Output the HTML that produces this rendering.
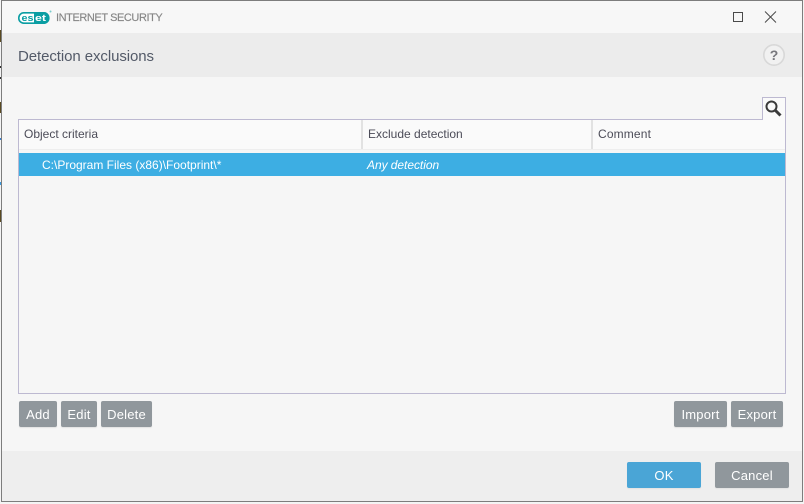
<!DOCTYPE html>
<html><head><meta charset="utf-8">
<style>
html,body{margin:0;padding:0;width:804px;height:504px;overflow:hidden;background:#f4f4f4}
*{box-sizing:border-box}
body{position:relative;font-family:"Liberation Sans",sans-serif;color:#4a4a55}
.a{position:absolute;white-space:nowrap}
.btn{position:absolute;background:#90979c;color:#fff;border-radius:2px;font-size:13px;letter-spacing:.2px;line-height:28px;height:26px;text-align:center;box-shadow:0 1px 1px #e2e2e2}
.th{font-size:12px;line-height:16px;top:126px;color:#4c4c58}
.div{position:absolute;top:120px;height:29px;width:2px;background:#e2e2e2}
</style></head><body>
<div class="a" style="left:1px;top:0;width:802px;height:502px;border:1px solid #7d7d7d;background:#f6f6f6"></div>
<div class="a" style="left:2px;top:1px;width:800px;height:32px;background:#f7f7f7"></div>
<div class="a" style="left:2px;top:33px;width:800px;height:44px;background:#ececec"></div>
<div class="a" style="left:2px;top:451px;width:800px;height:50px;background:#eeeeee"></div>
<div class="a" style="left:0;top:30px;width:1px;height:12px;background:#5a4a20"></div>
<div class="a" style="left:0;top:66px;width:1px;height:2px;background:#333"></div>
<div class="a" style="left:0;top:77px;width:1px;height:2px;background:#333"></div>
<div class="a" style="left:0;top:102px;width:1px;height:11px;background:#5a4a20"></div>
<div class="a" style="left:0;top:138px;width:1px;height:2px;background:#3a80d0"></div>
<div class="a" style="left:0;top:182px;width:1px;height:3px;background:#3a9ae0"></div>
<div class="a" style="left:0;top:210px;width:1px;height:12px;background:#5a4a20"></div>

<svg class="a" style="left:18px;top:10px" width="34" height="15" viewBox="0 0 34 15">
<rect x="0.8" y="2.8" width="30" height="10.4" rx="5" fill="#fff" stroke="#0a9ea3" stroke-width="1.6"/>
<path d="M16 2h10a5 5 0 0 1 5 5v2a5 5 0 0 1-5 5H16z" fill="#0a9ea3"/>
<text x="3.5" y="11" font-family="Liberation Sans" font-weight="700" font-size="9.5" fill="#0a9ea3" textLength="12" lengthAdjust="spacingAndGlyphs">es</text>
<text x="17" y="11" font-family="Liberation Sans" font-weight="700" font-size="9.5" fill="#fff" textLength="11" lengthAdjust="spacingAndGlyphs">et</text>
<circle cx="32.5" cy="1.5" r="1" fill="#7cc"/>
</svg>
<div class="a" style="left:56px;top:11px;font-size:11px;line-height:15px;color:#868686;letter-spacing:-.42px;-webkit-text-stroke:.15px #868686">INTERNET SECURITY</div>

<svg class="a" style="left:733px;top:11px" width="48" height="12" viewBox="0 0 48 12" fill="none" stroke="#4a4a4a" stroke-width="1">
<rect x="0.5" y="1.5" width="9" height="9"/>
<path d="M32 0.5L43 11.5M43 0.5L32 11.5"/>
</svg>

<div class="a" style="left:18px;top:47px;font-size:15px;line-height:20px;color:#535a68;letter-spacing:-.08px">Detection exclusions</div>

<svg class="a" style="left:762px;top:43px" width="24" height="24" viewBox="0 0 24 24">
<circle cx="12" cy="12" r="10.2" fill="#f1f1f1" stroke="#d8d8d8" stroke-width="1.6"/>
<text x="12" y="17" text-anchor="middle" font-family="Liberation Sans" font-weight="700" font-size="14" fill="#77777c">?</text>
</svg>

<div class="a" style="left:18px;top:119px;width:768px;height:275px;border:1px solid #bdb9d1;background:#f6f6f6"></div>
<div class="a" style="left:19px;top:120px;width:766px;height:29px;background:#fafafa"></div>
<div class="a" style="left:19px;top:149px;width:766px;height:1px;background:#eeeeee"></div>
<div class="div" style="left:361px"></div>
<div class="div" style="left:591px"></div>
<div class="a th" style="left:24px">Object criteria</div>
<div class="a th" style="left:368px">Exclude detection</div>
<div class="a th" style="left:598px;letter-spacing:.15px">Comment</div>
<div class="a" style="left:762px;top:97px;width:24px;height:23px;background:#fafafa;border:1px solid #bdb9d1;border-bottom:0"></div>
<svg class="a" style="left:764px;top:99px" width="20" height="20" viewBox="0 0 20 20" fill="none">
<circle cx="7.5" cy="7.5" r="5" stroke="#3a3a3a" stroke-width="2"/>
<path d="M11.5 11.5L16.5 16.5" stroke="#3a3a3a" stroke-width="3"/>
</svg>

<div class="a" style="left:19px;top:153px;width:766px;height:23px;background:#3daee3"></div>
<div class="a" style="left:42px;top:157px;font-size:12px;line-height:16px;color:#fff">C:\Program Files (x86)\Footprint\*</div>
<div class="a" style="left:367px;top:157px;font-size:12px;line-height:16px;color:#fff;font-style:italic;letter-spacing:-.05px">Any detection</div>

<div class="btn" style="left:19px;top:401px;width:38px">Add</div>
<div class="btn" style="left:61px;top:401px;width:36px">Edit</div>
<div class="btn" style="left:101px;top:401px;width:51px">Delete</div>
<div class="btn" style="left:674px;top:401px;width:53px">Import</div>
<div class="btn" style="left:731px;top:401px;width:52px">Export</div>
<div class="btn" style="left:627px;top:462px;width:74px;background:#4aa5d6">OK</div>
<div class="btn" style="left:715px;top:462px;width:74px">Cancel</div>
</body></html>
